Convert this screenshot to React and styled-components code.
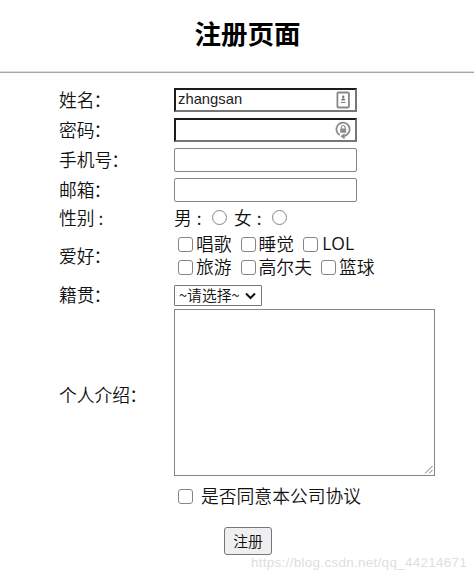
import React from 'react';
import styled, { createGlobalStyle } from 'styled-components';

const hobbies = [
  ['唱歌', '睡觉', 'LOL'],
  ['旅游', '高尔夫', '篮球'],
];

const GlobalStyle = createGlobalStyle`
  * {
    box-sizing: border-box;
  }

  body {
    margin: 0;
    background: #fff;
    color: #111;
    font-family: "Noto Sans CJK SC", sans-serif;
    font-size: 17.8px;
    font-weight: 350;
    line-height: 22px;
  }
`;

const Page = styled.main`
  position: relative;
  height: 579px;
  overflow: hidden;
`;

const Title = styled.h1`
  height: 71px;
  margin: 0;
  padding: 13px 0 0 21px;
  color: #000;
  font-size: 26.5px;
  font-weight: 700;
  line-height: 40px;
  text-align: center;
`;

const Divider = styled.hr`
  height: 2px;
  margin: 0 0 12px;
  border: 0;
  border-top: 1px solid #dedede;
  border-bottom: 1px solid #a6a6a6;
`;

const Form = styled.form`
  display: grid;
  grid-template-columns: 115px 262px;
  grid-template-rows: repeat(4, 30px) 26px 50px 28px 167px 41px;
  align-items: center;
  padding-left: 59px;
`;

const Label = styled.label`
  padding: ${({ $low }) => ($low ? '2px 0 0' : '0 0 2px')};
  white-space: pre;
`;

const Colon = styled.span`
  margin-left: -1px;
`;

const Field = styled.div`
  display: flex;
  align-items: center;
  justify-content: space-between;
  width: 183px;
  height: 24px;
  padding-right: ${({ $saved }) => ($saved ? '4px' : '0')};
  border: ${({ $saved }) => ($saved ? '2px solid' : '1px solid #858585')};
  ${({ $saved }) => $saved && 'border-color: #1c1c1c #777 #777 #1c1c1c;'}
  border-radius: ${({ $saved }) => ($saved ? '0' : '2px')};
`;

const Input = styled.input`
  flex: 1;
  min-width: 0;
  height: 18px;
  padding: 0 2px 2px;
  border: 0;
  outline: 0;
  background: transparent;
  color: #222;
  font: 400 14.8px "Liberation Sans", sans-serif;
`;

const Line = styled.div`
  display: flex;
  align-items: center;
  height: 23px;
  white-space: pre;
`;

const Gender = styled(Line)`
  gap: 7px;
  padding-bottom: 2px;
`;

const GenderOption = styled.label`
  display: flex;
  align-items: center;
  justify-content: space-between;
  width: 53px;
  word-spacing: 1px;
`;

const Hobby = styled.label`
  display: flex;
  align-items: center;
  margin-right: 9px;
`;

const Name = styled.span`
  padding-bottom: ${({ $lift }) => $lift || 2}px;
`;

const Latin = styled(Name)`
  padding-left: 1px;
  font-family: "Open Sans", sans-serif;
  font-size: 17.5px;
  font-weight: 400;
`;

const Box = styled.input`
  appearance: none;
  flex: none;
  width: 15px;
  height: 15px;
  margin: 0 ${({ $gap }) => $gap || 3}px 0 0;
  border: 1px solid #858585;
  border-radius: 3px;
  background: #fff;
`;

const Radio = styled(Box)`
  margin: 0;
  border-radius: 50%;
`;

const Hobbies = styled.div`
  padding: 0 0 1px 4px;
`;

const Select = styled.button`
  display: flex;
  align-items: center;
  justify-content: space-between;
  width: 88px;
  height: 21px;
  margin-top: 1px;
  padding: 0 5px 0 4px;
  border: 1px solid #767676;
  border-radius: 1px;
  background: #fff;
  color: #111;
  font: inherit;
  font-size: 14.8px;
  line-height: 18px;
  white-space: nowrap;
`;

const IntroArea = styled.textarea`
  display: block;
  width: 261px;
  height: 167px;
  margin: 0;
  border: 1px solid #858585;
  resize: none;
  outline: 0;
`;

const IntroWrap = styled.div`
  position: relative;
  width: 261px;
`;

const Grip = styled.svg`
  position: absolute;
  right: 2px;
  bottom: 2px;
`;

const Agree = styled(Line)`
  grid-column: 2;
  padding-left: 4px;
`;

const Submit = styled.button`
  display: block;
  width: 48px;
  height: 28px;
  margin: 10px 0 0 224px;
  padding: 0 0 1px;
  border: 1px solid #767676;
  border-radius: 3px;
  background: #efefef;
  color: #111;
  font: inherit;
  font-size: 14.8px;
  line-height: 24px;
`;

const Watermark = styled.span`
  position: absolute;
  left: 251px;
  top: 553px;
  color: #dedede;
  font: 400 13.4px/20px "Liberation Sans", sans-serif;
  letter-spacing: 0.32px;
  white-space: nowrap;
`;

const CardIcon = () => (
  <svg width="15" height="18" viewBox="0 0 15 18" fill="none" stroke="#888">
    <rect x="1.4" y="1.5" width="11.5" height="15" rx="1" strokeWidth="1.8" />
    <circle cx="7.2" cy="5.8" r="1.2" fill="#777" stroke="none" />
    <path d="M5.2 9.5c0-3 4 -3 4 0z" fill="#777" stroke="none" />
    <path d="M4.7 11.5h5" />
  </svg>
);

const LockIcon = () => (
  <svg width="16" height="20" viewBox="0 0 16 20" fill="none" stroke="#8c8c8c">
    <path d="M4.8 15A6.6 6.6 0 1 1 13 13.6Q11.2 15.8 8.5 16.2" strokeWidth="1.8" />
    <path d="M9.6 13.2v6L5.4 16.2z" fill="#8c8c8c" stroke="none" />
    <rect x="5.2" y="8.4" width="6" height="4.4" rx=".6" fill="#8c8c8c" stroke="none" />
    <path d="M6.4 8.7V7.3a1.8 1.8 0 0 1 3.6 0v1.4" strokeWidth="1.2" />
  </svg>
);

const App = () => (
  <Page>
    <GlobalStyle />
    <Title>注册页面</Title>
    <Divider />
    <Form>
      <Label htmlFor="name">姓名<Colon>：</Colon></Label>
      <Field $saved>
        <Input id="name" defaultValue="zhangsan" spellCheck={false} />
        <CardIcon />
      </Field>

      <Label htmlFor="password">密码<Colon>：</Colon></Label>
      <Field $saved>
        <Input id="password" type="password" />
        <LockIcon />
      </Field>

      <Label htmlFor="phone">手机号<Colon>：</Colon></Label>
      <Field><Input id="phone" /></Field>

      <Label htmlFor="email">邮箱<Colon>：</Colon></Label>
      <Field><Input id="email" /></Field>

      <Label as="span">性别 :</Label>
      <Gender>
        {['男', '女'].map(gender => (
          <GenderOption key={gender}>
            <span>{`${gender} :`}</span>
            <Radio type="radio" name="gender" />
          </GenderOption>
        ))}
      </Gender>

      <Label as="span">爱好<Colon>：</Colon></Label>
      <Hobbies>
        {hobbies.map(line => (
          <Line key={line[0]}>
            {line.map(name => (
              <Hobby key={name}>
                <Box type="checkbox" />
                {name === 'LOL' ? <Latin>{name}</Latin> : <Name>{name}</Name>}
              </Hobby>
            ))}
          </Line>
        ))}
      </Hobbies>

      <Label as="span">籍贯<Colon>：</Colon></Label>
      <Select type="button">
        <Name>~请选择~</Name>
        <svg width="11" height="8" viewBox="0 0 11 8" fill="none" stroke="#111" strokeWidth="2">
          <path d="M1 1.5l4.5 4.5L10 1.5" />
        </svg>
      </Select>

      <Label htmlFor="intro" $low>个人介绍<Colon>：</Colon></Label>
      <IntroWrap>
        <IntroArea id="intro" />
        <Grip width="9" height="9" viewBox="0 0 9 9" stroke="#777">
          <path d="M1 8.5L8.5 1M5 8.5L8.5 5" />
        </Grip>
      </IntroWrap>

      <Agree as="label">
        <Box type="checkbox" $gap={8} />
        <Name $lift={3}>是否同意本公司协议</Name>
      </Agree>
    </Form>
    <Submit type="button">注册</Submit>
    <Watermark>https://blog.csdn.net/qq_44214671</Watermark>
  </Page>
);

export default App;
